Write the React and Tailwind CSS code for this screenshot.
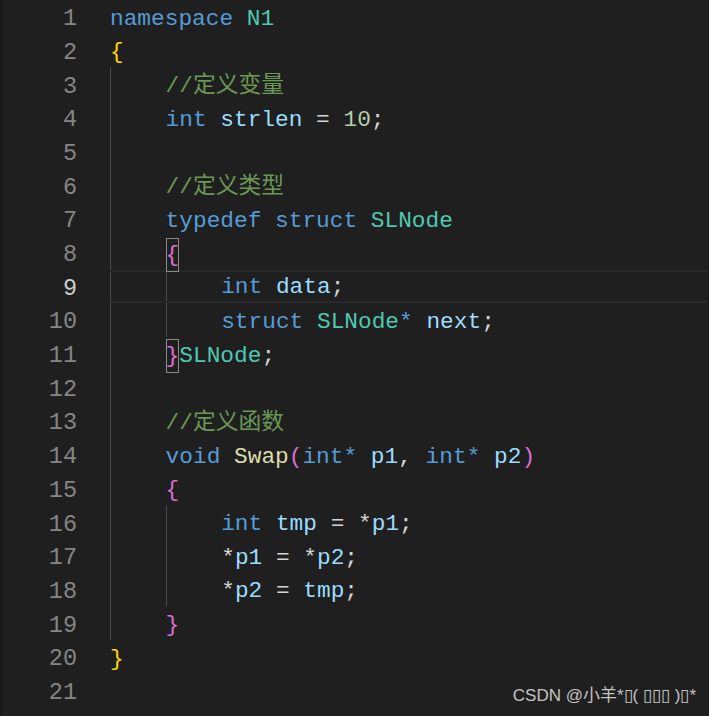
import React from 'react'

const C = {
  kw: 'text-[#569cd6]',
  v: 'text-[#9cdcfe]',
  t: 'text-[#4ec9b0]',
  fn: 'text-[#dcdcaa]',
  cm: 'text-[#6a9955]',
  num: 'text-[#b5cea8]',
  op: 'text-[#d4d4d4]',
  gold: 'text-[#ffd700]',
  pink: 'text-[#da70d6]',
}

// each line: indent level, guide levels drawn, tokens [text, colour, boxed?]
const lines = [
  { ind: 0, g: 0, tk: [['namespace', 'kw'], [' '], ['N1', 't']] },
  { ind: 0, g: 0, tk: [['{', 'gold']] },
  { ind: 1, g: 1, tk: [['//定义变量', 'cm']] },
  { ind: 1, g: 1, tk: [['int', 'kw'], [' '], ['strlen', 'v'], [' = ', 'op'], ['10', 'num'], [';', 'op']] },
  { ind: 1, g: 1, tk: [] },
  { ind: 1, g: 1, tk: [['//定义类型', 'cm']] },
  { ind: 1, g: 1, tk: [['typedef', 'kw'], [' '], ['struct', 'kw'], [' '], ['SLNode', 't']] },
  { ind: 1, g: 1, tk: [['{', 'pink', true]] },
  { ind: 2, g: 2, tk: [['int', 'kw'], [' '], ['data', 'v'], [';', 'op']], cur: true },
  { ind: 2, g: 2, tk: [['struct', 'kw'], [' '], ['SLNode', 't'], ['*', 'kw'], [' '], ['next', 'v'], [';', 'op']] },
  { ind: 1, g: 1, tk: [['}', 'pink', true], ['SLNode', 't'], [';', 'op']] },
  { ind: 1, g: 1, tk: [] },
  { ind: 1, g: 1, tk: [['//定义函数', 'cm']] },
  { ind: 1, g: 1, tk: [['void', 'kw'], [' '], ['Swap', 'fn'], ['(', 'pink'], ['int*', 'kw'], [' '], ['p1', 'v'], [', ', 'op'], ['int*', 'kw'], [' '], ['p2', 'v'], [')', 'pink']] },
  { ind: 1, g: 1, tk: [['{', 'pink']] },
  { ind: 2, g: 2, tk: [['int', 'kw'], [' '], ['tmp', 'v'], [' = *', 'op'], ['p1', 'v'], [';', 'op']] },
  { ind: 2, g: 2, tk: [['*', 'op'], ['p1', 'v'], [' = *', 'op'], ['p2', 'v'], [';', 'op']] },
  { ind: 2, g: 2, tk: [['*', 'op'], ['p2', 'v'], [' = ', 'op'], ['tmp', 'v'], [';', 'op']] },
  { ind: 1, g: 1, tk: [['}', 'pink']] },
  { ind: 0, g: 0, tk: [['}', 'gold']] },
  { ind: 0, g: 0, tk: [] },
]

function Line({ line }) {
  const units = Array.from({ length: line.ind })
  return (
    <div
      className={
        'flex h-[33.7px] items-stretch whitespace-pre ' +
        (line.cur ? 'border-y-2 border-[#282828]' : '')
      }
    >
      {units.map((_, i) => (
        <span
          key={i}
          className={'inline-block w-[55.6px] shrink-0 ' + (i < line.g ? 'border-l border-[#4b4b4b]' : '')}
        />
      ))}
      <span className={'flex items-center ' + (line.cur ? 'pt-[2px]' : 'pt-[4px]')}>
        {line.tk.map(([text, col, boxed], i) =>
          boxed ? (
            <span key={i} className={'outline outline-1 outline-[#8a8a8a] -outline-offset-1 ' + C[col]}>
              {text}
            </span>
          ) : (
            <span key={i} className={col ? C[col] : ''}>
              {text}
            </span>
          )
        )}
      </span>
    </div>
  )
}

export default function App() {
  return (
    <div className="relative h-[716px] w-[709px] overflow-hidden border-l-2 border-r border-l-[#181818] border-r-[#181818] bg-[#1f1f1f] font-['Liberation_Mono','Noto_Sans_CJK_SC',monospace] text-[22.8px]">
      <div className="flex">
        <div className="w-[75px] shrink-0 text-right text-[23.5px] text-[#858585]">
          {lines.map((l, i) => (
            <div key={i} className={'flex h-[33.7px] items-center justify-end pt-[4px] ' + (l.cur ? 'text-[#cccccc]' : '')}>
              {i + 1}
            </div>
          ))}
        </div>
        <div className="ml-[33px] flex-1">
          {lines.map((l, i) => (
            <Line key={i} line={l} />
          ))}
        </div>
      </div>
      <div className="absolute bottom-[8px] right-[12px] font-['Liberation_Sans','Noto_Sans_CJK_SC',sans-serif] text-[17px] text-[#c4c4c4]">
        CSDN @小羊*▯( ▯▯▯ )▯*
      </div>
    </div>
  )
}
